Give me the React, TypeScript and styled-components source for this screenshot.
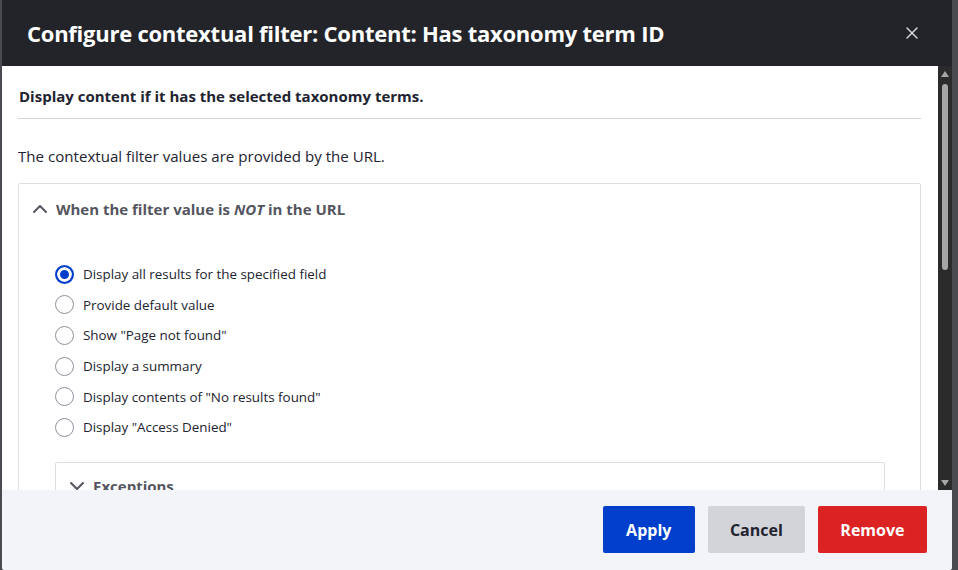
import styled, { createGlobalStyle } from 'styled-components';

const GlobalStyle = createGlobalStyle`
  html, body {
    margin: 0;
    padding: 0;
  }
  body {
    background: #4a4b50;
    font-family: "Open Sans", "Noto Sans", sans-serif;
    overflow: hidden;
  }
`;

const Dialog = styled.div`
  margin-left: 2px;
  width: 950px;
  height: 570px;
  display: flex;
  flex-direction: column;
  background: #fff;
  overflow: hidden;
  border-radius: 0 0 3px 3px;
`;

const TitleBar = styled.div`
  flex: none;
  height: 66px;
  box-sizing: border-box;
  padding: 0 30px 0 25px;
  background: #232429;
  display: flex;
  align-items: center;
  justify-content: space-between;
`;

const Title = styled.h1`
  margin: 0;
  color: #fff;
  font-size: 22px;
  font-weight: 700;
  letter-spacing: -0.25px;
`;

const CloseButton = styled.button`
  width: 20px;
  height: 20px;
  padding: 0;
  border: 0;
  background: transparent;
  color: #d8d9dd;
  display: flex;
  align-items: center;
  justify-content: center;
  cursor: pointer;
`;

const Main = styled.div`
  flex: 1;
  min-height: 0;
  display: flex;
`;

const Body = styled.div`
  flex: 1;
  min-width: 0;
  overflow: hidden;
  padding: 0 17px 0 16px;
  color: #222330;
`;

/* the dialog's scrollbar, drawn */
const ScrollTrack = styled.div`
  flex: none;
  width: 14px;
  box-sizing: border-box;
  padding: 5px 0 4px;
  background: #2b2b2b;
  display: flex;
  flex-direction: column;
  align-items: center;
`;

const ScrollArrow = styled.span<{ $down?: boolean }>`
  flex: none;
  width: 0;
  height: 0;
  border-left: 4px solid transparent;
  border-right: 4px solid transparent;
  ${(p) => (p.$down ? 'border-top: 6px solid #a6a6a6;' : 'border-bottom: 6px solid #a6a6a6;')}
`;

const ThumbArea = styled.div`
  flex: 1;
  padding-top: 7px;
`;

const Thumb = styled.div`
  width: 6px;
  border-radius: 3px;
  background: #a6a6a6;
`;

const Lead = styled.p`
  margin: 0;
  padding: 18px 0 10px 1px;
  font-size: 15px;
  line-height: 24px;
  font-weight: 700;
  border-bottom: 1px solid #d4d4d8;
`;

const Intro = styled.p`
  margin: 25px 0 15px 0;
  font-size: 15.1px;
  line-height: 24px;
`;

const Details = styled.details<{ $nested?: boolean }>`
  margin: ${(p) => (p.$nested ? '19px 0 0 0' : '0')};
  border: 1px solid #dedee2;
  border-radius: 2px;
`;

const Summary = styled.summary<{ $nested?: boolean }>`
  list-style: none;
  display: flex;
  align-items: center;
  gap: 9px;
  padding: ${(p) => (p.$nested ? '11px 14px 13px' : '13px 14px')};
  font-size: 15px;
  line-height: 24px;
  font-weight: 700;
  color: #545560;
  cursor: pointer;

  &::-webkit-details-marker {
    display: none;
  }
  em {
    font-style: italic;
  }
`;

const Chevron = styled.svg`
  flex: none;
  width: 14px;
  height: 14px;
`;

const DetailsContent = styled.div<{ $nested?: boolean }>`
  padding: ${(p) => (p.$nested ? '6px 24px 20px 24px' : '25px 35px 30px 36px')};
`;

const RadioList = styled.div`
  display: flex;
  flex-direction: column;
`;

const RadioRow = styled.label`
  display: flex;
  align-items: center;
  gap: 9px;
  height: 30.6px;
  font-size: 13.4px;
  color: #222330;
`;

const RadioInput = styled.input`
  appearance: none;
  margin: 0;
  width: 19px;
  height: 19px;
  border-radius: 50%;
  border: 1px solid #8e929c;
  background: #fff;
  box-sizing: border-box;

  &:checked {
    border: 2px solid #003ecc;
    background: #003ecc;
    box-shadow: inset 0 0 0 3px #fff;
  }
`;

const FieldLabel = styled.div`
  font-size: 14px;
  font-weight: 700;
  margin: 10px 0 6px;
`;

const TextInput = styled.input`
  width: 280px;
  height: 40px;
  box-sizing: border-box;
  border: 1px solid #8e929c;
  border-radius: 2px;
  padding: 0 12px;
  font: inherit;
  font-size: 15px;
`;

const Description = styled.div`
  margin-top: 6px;
  font-size: 13px;
  color: #545560;
`;

const Collapsed = styled.div`
  margin-top: 16px;
  display: flex;
  flex-direction: column;
  gap: 16px;
  padding-bottom: 40px;
`;

const Footer = styled.div`
  flex: none;
  height: 80px;
  box-sizing: border-box;
  padding: 16px 25px 17px;
  background: #f3f4f9;
  display: flex;
  justify-content: flex-end;
  gap: 13px;
`;

type Variant = 'primary' | 'default' | 'danger';

const Button = styled.button<{ $variant: Variant }>`
  height: 47px;
  padding: 0 ${(p) => (p.$variant === 'primary' ? '23.5px' : p.$variant === 'danger' ? '22.5px' : '22px')};
  border: 0;
  border-radius: 2px;
  font-family: inherit;
  font-size: 16px;
  font-weight: 700;
  cursor: pointer;
  background: ${(p) =>
    p.$variant === 'primary' ? '#003ecc' : p.$variant === 'danger' ? '#dc2323' : '#d3d4d9'};
  color: ${(p) => (p.$variant === 'default' ? '#222330' : '#fff')};
`;

const options = [
  'Display all results for the specified field',
  'Provide default value',
  'Show "Page not found"',
  'Display a summary',
  'Display contents of "No results found"',
  'Display "Access Denied"',
];

function ChevronIcon({ up }: { up?: boolean }) {
  return (
    <Chevron viewBox="0 0 14 14" fill="none" stroke="#545560" strokeWidth="2" strokeLinecap="round" strokeLinejoin="round">
      {up ? <polyline points="1,10 7,4 13,10" /> : <polyline points="1,4 7,10 13,4" />}
    </Chevron>
  );
}

export default function App() {
  return (
    <>
      <GlobalStyle />
      <Dialog>
        <TitleBar>
          <Title>Configure contextual filter: Content: Has taxonomy term ID</Title>
          <CloseButton aria-label="Close">
            <svg width="12" height="12" viewBox="0 0 12 12" stroke="currentColor" strokeWidth="1.4" strokeLinecap="round">
              <line x1="1" y1="1" x2="11" y2="11" />
              <line x1="11" y1="1" x2="1" y2="11" />
            </svg>
          </CloseButton>
        </TitleBar>

        <Main>
          <Body>
            <Lead>Display content if it has the selected taxonomy terms.</Lead>
            <Intro>The contextual filter values are provided by the URL.</Intro>

            <Details open>
              <Summary>
                <ChevronIcon up />
                <span>
                  When the filter value is <em>NOT</em> in the URL
                </span>
              </Summary>
              <DetailsContent>
                <RadioList>
                  {options.map((o, i) => (
                    <RadioRow key={o}>
                      <RadioInput type="radio" name="default_action" defaultChecked={i === 0} />
                      {o}
                    </RadioRow>
                  ))}
                </RadioList>

                <Details $nested>
                  <Summary $nested>
                    <ChevronIcon />
                    <span>Exceptions</span>
                  </Summary>
                  <DetailsContent $nested>
                    <FieldLabel>Exception value</FieldLabel>
                    <TextInput defaultValue="all" />
                    <Description>If this value is received, the filter will be ignored; i.e, "all values"</Description>
                  </DetailsContent>
                </Details>
              </DetailsContent>
            </Details>

            <Collapsed>
              <Details>
                <Summary>
                  <ChevronIcon />
                  <span>When the filter value IS in the URL or a default is provided</span>
                </Summary>
              </Details>
              <Details>
                <Summary>
                  <ChevronIcon />
                  <span>More</span>
                </Summary>
              </Details>
            </Collapsed>
          </Body>

          <ScrollTrack>
            <ScrollArrow />
            <ThumbArea>
              <Thumb style={{ height: 186 }} />
            </ThumbArea>
            <ScrollArrow $down />
          </ScrollTrack>
        </Main>

        <Footer>
          <Button $variant="primary">Apply</Button>
          <Button $variant="default">Cancel</Button>
          <Button $variant="danger">Remove</Button>
        </Footer>
      </Dialog>
    </>
  );
}
